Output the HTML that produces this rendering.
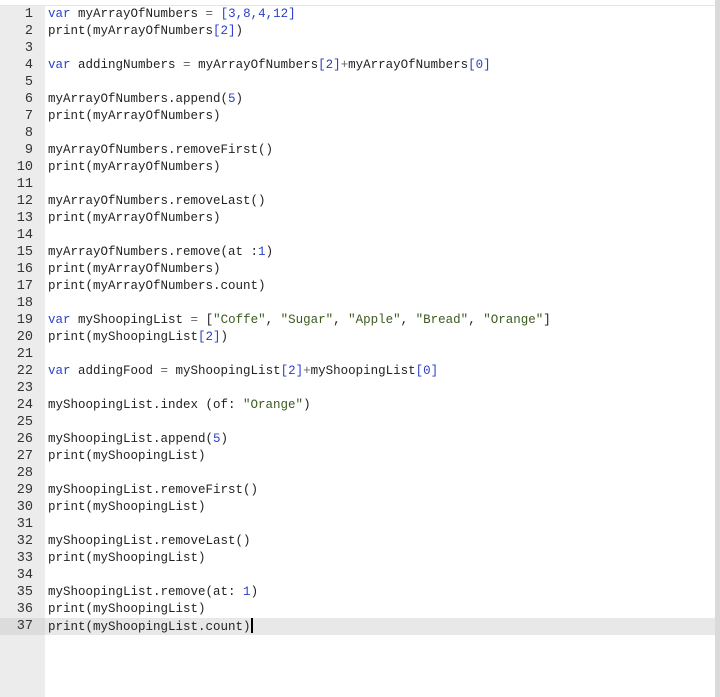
<!DOCTYPE html>
<html><head><style>
body{margin:0;width:720px;height:697px;background:#fff;position:relative;overflow:hidden;font-family:"Liberation Mono",monospace;font-size:12.5px;}
.g{position:absolute;left:0;top:6px;width:45px;height:691px;background:#ececec;}
.top{position:absolute;left:0;top:0;width:715px;height:5px;border-bottom:1px solid #e4e4e4;background:#fff}
.sb{position:absolute;right:0;top:0;width:5px;height:697px;background:#dadada}
.hl{position:absolute;left:0;top:618px;width:715px;height:17px;background:#e8e8e8}
.hl .gh{position:absolute;left:0;top:0;width:45px;height:17px;background:#dcdcdc}
.ln{position:absolute;left:0;top:6px;width:33px;text-align:right;color:#333;line-height:17px;white-space:pre;font-size:13.5px}
.code{position:absolute;left:48px;top:6px;color:#222;line-height:17px;white-space:pre}
.k{color:#2b3fc7}.n{color:#2b3fc7}.s{color:#3b5a1f}.o{color:#666}
.cur{display:inline-block;width:2px;height:15px;background:#000;vertical-align:-3px}
</style></head><body>
<div class="g"></div><div class="top"></div><div class="hl"><div class="gh"></div></div><div class="sb"></div>
<div class="ln">1
2
3
4
5
6
7
8
9
10
11
12
13
14
15
16
17
18
19
20
21
22
23
24
25
26
27
28
29
30
31
32
33
34
35
36
37</div>
<div class="code"><span class="k">var</span> myArrayOfNumbers <span class="o">=</span> <span class="n">[3,8,4,12]</span>
print(myArrayOfNumbers<span class="n">[2]</span>)

<span class="k">var</span> addingNumbers <span class="o">=</span> myArrayOfNumbers<span class="n">[2]</span><span class="o">+</span>myArrayOfNumbers<span class="n">[0]</span>

myArrayOfNumbers.append(<span class="n">5</span>)
print(myArrayOfNumbers)

myArrayOfNumbers.removeFirst()
print(myArrayOfNumbers)

myArrayOfNumbers.removeLast()
print(myArrayOfNumbers)

myArrayOfNumbers.remove(at :<span class="n">1</span>)
print(myArrayOfNumbers)
print(myArrayOfNumbers.count)

<span class="k">var</span> myShoopingList <span class="o">=</span> [<span class="s">"Coffe"</span>, <span class="s">"Sugar"</span>, <span class="s">"Apple"</span>, <span class="s">"Bread"</span>, <span class="s">"Orange"</span>]
print(myShoopingList<span class="n">[2]</span>)

<span class="k">var</span> addingFood <span class="o">=</span> myShoopingList<span class="n">[2]</span><span class="o">+</span>myShoopingList<span class="n">[0]</span>

myShoopingList.index (of: <span class="s">"Orange"</span>)

myShoopingList.append(<span class="n">5</span>)
print(myShoopingList)

myShoopingList.removeFirst()
print(myShoopingList)

myShoopingList.removeLast()
print(myShoopingList)

myShoopingList.remove(at: <span class="n">1</span>)
print(myShoopingList)
print(myShoopingList.count)<span class="cur"></span></div>
</body></html>
